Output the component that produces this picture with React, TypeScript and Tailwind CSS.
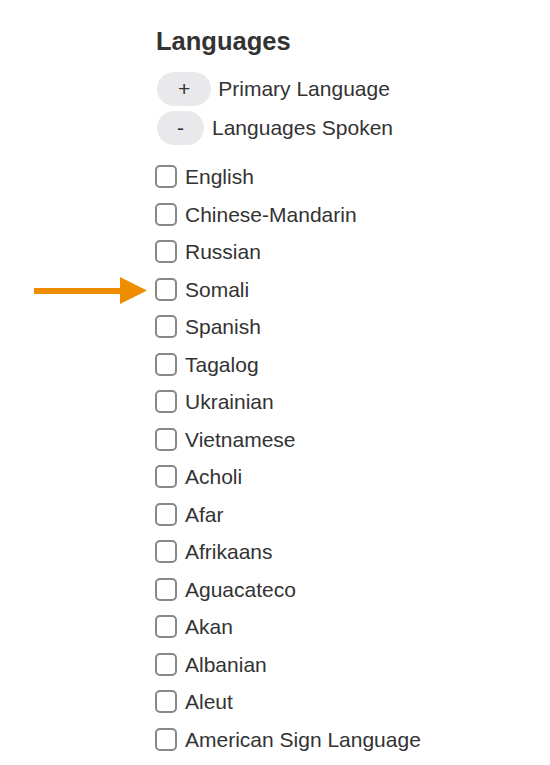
import React from "react";

const langs = [
  "English",
  "Chinese-Mandarin",
  "Russian",
  "Somali",
  "Spanish",
  "Tagalog",
  "Ukrainian",
  "Vietnamese",
  "Acholi",
  "Afar",
  "Afrikaans",
  "Aguacateco",
  "Akan",
  "Albanian",
  "Aleut",
  "American Sign Language",
];

export default function App() {
  return (
    <div className="relative w-[550px] h-[765px] bg-white text-[#333333] overflow-hidden font-['Liberation_Sans',Arial,Helvetica,sans-serif]">
      <div className="pl-[155px] pt-[26px]">
        <h2 className="pl-[1px] text-[25.5px] leading-[30px] font-semibold text-[#333333]">Languages</h2>
        <div className="mt-[13px] flex flex-col">
          <div className="h-[39px] flex items-center pl-[2px]">
            <span className="h-[34px] px-[21px] rounded-full bg-[#e9e9ec] flex items-center text-[21px]">+</span>
            <span className="ml-[7px] text-[21px]">Primary Language</span>
          </div>
          <div className="h-[39px] flex items-center pl-[2px]">
            <span className="h-[34px] px-[20px] rounded-full bg-[#e9e9ec] flex items-center text-[21px]">-</span>
            <span className="ml-[8px] text-[21px]">Languages Spoken</span>
          </div>
        </div>
        <ul className="mt-[11px] flex flex-col">
          {langs.map((l) => (
            <li key={l} className="h-[37.5px] flex items-center">
              <span className="w-[22px] h-[23px] rounded-[5px] border-2 border-[#888888] bg-white shrink-0" />
              <span className="ml-[8px] text-[21px] leading-none">{l}</span>
            </li>
          ))}
        </ul>
      </div>
      <svg className="absolute left-[34px] top-[277px]" width="113" height="27" viewBox="0 0 113 27">
        <rect x="0" y="11" width="88" height="6" fill="#f08c00" />
        <polygon points="86,0 113,13.5 86,27" fill="#f08c00" />
      </svg>
    </div>
  );
}
